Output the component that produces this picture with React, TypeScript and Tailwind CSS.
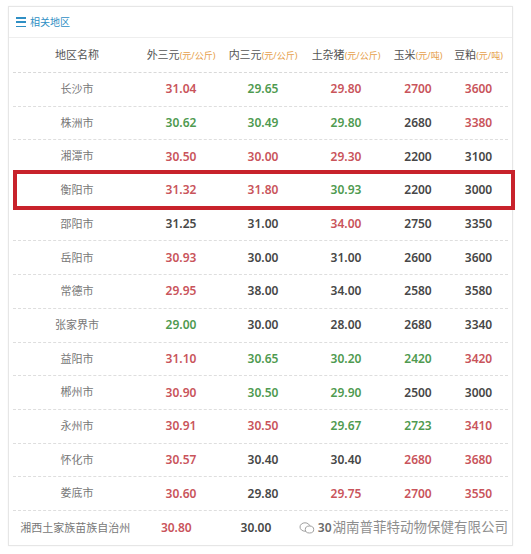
import React from "react";

type C = "r" | "g" | "d";
type Row = { name: string; v: [string, C][] };

const rows: Row[] = [
  { name: "长沙市", v: [["31.04", "r"], ["29.65", "g"], ["29.80", "r"], ["2700", "r"], ["3600", "r"]] },
  { name: "株洲市", v: [["30.62", "g"], ["30.49", "g"], ["29.80", "g"], ["2680", "d"], ["3380", "r"]] },
  { name: "湘潭市", v: [["30.50", "r"], ["30.00", "r"], ["29.30", "r"], ["2200", "d"], ["3100", "d"]] },
  { name: "衡阳市", v: [["31.32", "r"], ["31.80", "r"], ["30.93", "g"], ["2200", "d"], ["3000", "d"]] },
  { name: "邵阳市", v: [["31.25", "d"], ["31.00", "d"], ["34.00", "r"], ["2750", "d"], ["3350", "d"]] },
  { name: "岳阳市", v: [["30.93", "r"], ["30.00", "d"], ["31.00", "d"], ["2600", "d"], ["3600", "d"]] },
  { name: "常德市", v: [["29.95", "r"], ["38.00", "d"], ["34.00", "d"], ["2580", "d"], ["3580", "d"]] },
  { name: "张家界市", v: [["29.00", "g"], ["30.00", "d"], ["28.00", "d"], ["2680", "d"], ["3340", "d"]] },
  { name: "益阳市", v: [["31.10", "r"], ["30.65", "g"], ["30.20", "g"], ["2420", "g"], ["3420", "r"]] },
  { name: "郴州市", v: [["30.90", "r"], ["30.50", "g"], ["29.90", "g"], ["2500", "d"], ["3000", "d"]] },
  { name: "永州市", v: [["30.91", "r"], ["30.50", "r"], ["29.67", "g"], ["2723", "g"], ["3410", "r"]] },
  { name: "怀化市", v: [["30.57", "r"], ["30.40", "d"], ["30.40", "d"], ["2680", "r"], ["3680", "r"]] },
  { name: "娄底市", v: [["30.60", "r"], ["29.80", "d"], ["29.75", "r"], ["2700", "r"], ["3550", "r"]] },
  { name: "湘西土家族苗族自治州", v: [["30.80", "r"], ["30.00", "d"]] },
];

const cols = ["w-[128px]", "w-[80px]", "w-[84px]", "w-[82px]", "w-[62px]", "w-[59px]"];

const heads: [string, string][] = [
  ["外三元", "(元/公斤)"],
  ["内三元", "(元/公斤)"],
  ["土杂猪", "(元/公斤)"],
  ["玉米", "(元/吨)"],
  ["豆粕", "(元/吨)"],
];

function color(c: C) {
  if (c === "r") return "text-[#c9545b]";
  if (c === "g") return "text-[#4f9a50]";
  return "text-[#474747]";
}

export default function App() {
  return (
    <div
      className="min-h-[554px] bg-white pt-[6px]"
      style={{ fontFamily: '"Noto Sans", "Noto Sans CJK SC", sans-serif' }}
    >
      <div className="mx-2 w-[505px] border border-[#e6e6e6] px-1 shadow-[0_0_2px_rgba(0,0,0,0.05)]">
        <div className="-mx-1 flex h-[31px] items-center gap-1 border-b border-[#eeeeee] px-[7px] text-[10px] text-[#2f8fc4]">
          <span className="flex h-[10px] w-[10px] flex-col justify-between">
            <span className="block h-[1.5px] bg-[#2f8fc4]" />
            <span className="block h-[1.5px] bg-[#2f8fc4]" />
            <span className="block h-[1.5px] bg-[#2f8fc4]" />
          </span>
          <span>相关地区</span>
        </div>

        <div className="flex h-[35px] items-center border-b border-dashed border-[#d9d9d9] text-[11px] text-[#555]">
          <div className={`${cols[0]} text-center`}>地区名称</div>
          {heads.map(([a, b], i) => (
            <div key={a} className={`${cols[i + 1]} text-center whitespace-nowrap`}>
              {a}
              <span className="text-[9px] text-[#e6a04a]">{b}</span>
            </div>
          ))}
        </div>

        {rows.map((r, idx) => (
          <div
            key={r.name}
            className={`relative flex h-[33.7px] items-center ${
              idx < rows.length - 1 ? "border-b border-dashed border-[#dedede]" : ""
            }`}
          >
            <div className={`${cols[0]} text-center text-[11px] text-[#777] whitespace-nowrap`}>{r.name}</div>
            {r.v.map(([val, c], i) => (
              <div key={i} className={`${cols[i + 1]} text-center text-[12px] font-semibold ${color(c)}`}>
                {val}
              </div>
            ))}
            {r.name === "衡阳市" && (
              <div className="pointer-events-none absolute -top-[4px] -bottom-[3px] left-0 -right-[7px] border-[4px] border-[#c8222b]" />
            )}
            {idx === rows.length - 1 && (
              <div className="flex flex-1 items-center gap-[3px] pl-[2px] text-[13.5px] leading-none text-[#8f8f8f] [text-shadow:0_0_1px_#fff,0_0_2px_#fff] whitespace-nowrap">
                <svg width="16" height="14" viewBox="0 0 16 14" fill="none" stroke="#a0a0a0" strokeWidth="1">
                  <ellipse cx="6" cy="6" rx="5" ry="4.2" />
                  <ellipse cx="10.5" cy="8.5" rx="4.2" ry="3.5" fill="white" />
                </svg>
                <span className="font-semibold text-[#6a6a6a] text-[12px]">30</span>
                <span className="-ml-[2px]">湖南普菲特动物保健有限公司</span>
              </div>
            )}
          </div>
        ))}
      </div>
    </div>
  );
}
